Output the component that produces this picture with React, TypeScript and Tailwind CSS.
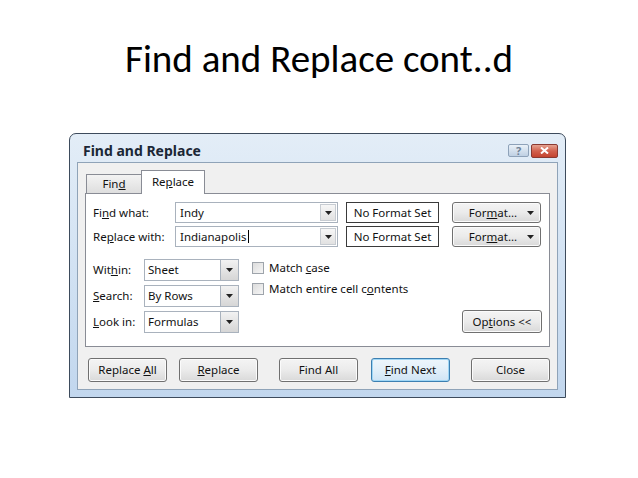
import React from 'react';

const ui = { fontFamily: '"Noto Sans", "Open Sans", sans-serif' };

const Arrow = () => (
  <svg width="7" height="4" viewBox="0 0 7 4">
    <path d="M0 0 L7 0 L3.5 4 Z" fill="#222" />
  </svg>
);

const Combo = ({ value, caret = false }: { value: string; caret?: boolean }) => (
  <div className="flex h-[21px] w-[163px] border border-[#a9b2bd] bg-white">
    <div className="flex flex-1 items-center pl-[4px] text-[11.5px] text-[#111]">
      <span>{value}</span>
      {caret && <span className="ml-px h-[13px] w-px bg-black" />}
    </div>
    <div className="m-px flex w-[16px] items-center justify-center border border-[#c7ccd2] bg-gradient-to-b from-[#f7f7f7] to-[#e1e1e1]">
      <Arrow />
    </div>
  </div>
);

const Select = ({ value }: { value: string }) => (
  <div className="flex h-[22px] w-[95px] border border-[#a9b2bd] bg-white">
    <div className="flex flex-1 items-center pl-[3px] text-[11.5px] text-[#111]">{value}</div>
    <div className="flex w-[18px] items-center justify-center border-l border-[#a9b2bd] bg-gradient-to-b from-[#f2f2f2] to-[#d6d6d6]">
      <Arrow />
    </div>
  </div>
);

const Btn = ({ children, className = '' }: { children: React.ReactNode; className?: string }) => (
  <div
    className={`flex items-center justify-center rounded-[3px] border border-[#707070] bg-gradient-to-b from-[#f4f4f4] via-[#ebebeb] to-[#d9d9d9] text-[11.5px] text-[#111] shadow-[inset_0_0_0_1px_#fbfbfb] ${className}`}
  >
    {children}
  </div>
);

const Check = ({ children }: { children: React.ReactNode }) => (
  <div className="flex items-center gap-[5px]">
    <div className="h-[12px] w-[12px] border border-[#9ea4ab] bg-gradient-to-br from-[#dcdcdc] to-[#f6f6f6]" />
    <span className="text-[11.5px] leading-[14px] text-[#111]">{children}</span>
  </div>
);

const FormatBtn = () => (
  <Btn className="ml-[13px] h-[21px] w-[89px] gap-[10px] pl-[10px]">
    <span>
      For<u>m</u>at...
    </span>
    <Arrow />
  </Btn>
);

export default function App() {
  return (
    <div className="h-[478px] w-[638px] overflow-hidden bg-white" style={ui}>
      <h1
        className="mt-[35px] text-center text-[39px] leading-[48px] text-black"
        style={{ fontFamily: 'Carlito, Lato, sans-serif' }}
      >
        Find and Replace cont..d
      </h1>

      <div className="ml-[69px] mt-[50px] flex h-[265px] w-[497px] flex-col rounded-t-[7px] border border-[#3d4b5c] bg-gradient-to-b from-[#e3edf7] via-[#d2e2f3] to-[#c2d7ee]">
        {/* title bar */}
        <div className="flex h-[28px] items-center justify-between pl-[13px] pr-[7px] pt-[5px]">
          <span className="text-[14px] font-bold text-[#1b2735]">Find and Replace</span>
          <div className="flex items-center gap-[2px]">
            <div className="flex h-[13px] w-[21px] items-center justify-center rounded-[2px] border border-[#8ea2b9] bg-gradient-to-b from-[#eaf1f8] to-[#bfd0e3] text-[11px] font-bold leading-none text-[#6f8196]">
              ?
            </div>
            <div className="flex h-[14px] w-[27px] items-center justify-center rounded-[2px] border border-[#8a3a32] bg-gradient-to-b from-[#e4a291] via-[#d2614e] to-[#c44430]">
              <svg width="9" height="7" viewBox="0 0 9 7">
                <path d="M1 0.5 L8 6.5 M8 0.5 L1 6.5" stroke="#fff" strokeWidth="2" />
              </svg>
            </div>
          </div>
        </div>

        {/* client */}
        <div className="mx-[7px] mb-[7px] flex flex-1 flex-col border border-[#8fa3b8] bg-[#f0f0f0]">
          {/* tabs */}
          <div className="ml-[8px] mt-[7px] flex h-[23px] items-end">
            <div className="flex h-[19px] w-[55px] items-center justify-center border border-b-0 border-r-0 border-[#898c95] bg-gradient-to-b from-[#f3f3f3] to-[#dedede] text-[11.5px] text-[#111]">
              <span>
                Fin<u>d</u>
              </span>
            </div>
            <div className="relative z-10 -mb-px flex h-[24px] w-[64px] items-center justify-center border border-b-0 border-[#898c95] bg-white pb-[2px] text-[11.5px] text-[#111]">
              <span>
                Re<u>p</u>lace
              </span>
            </div>
          </div>

          {/* panel */}
          <div className="ml-[7px] flex h-[154px] w-[465px] flex-col border border-[#898c95] bg-white px-[7px] pt-[8px] text-[11.5px] text-[#111]">
            <div className="flex items-center">
              <span className="w-[82px]">
                Fi<u>n</u>d what:
              </span>
              <Combo value="Indy" />
              <div className="ml-[8px] flex h-[21px] w-[93px] items-center justify-center border border-[#3a3a3a]">
                No Format Set
              </div>
              <FormatBtn />
            </div>
            <div className="mt-[3px] flex items-center">
              <span className="w-[82px]">
                Re<u>p</u>lace with:
              </span>
              <Combo value="Indianapolis" caret />
              <div className="ml-[8px] flex h-[21px] w-[93px] items-center justify-center border border-[#3a3a3a]">
                No Format Set
              </div>
              <FormatBtn />
            </div>

            <div className="mt-[12px] flex">
              <div className="flex flex-col gap-[4px]">
                <div className="flex items-center">
                  <span className="w-[51px]">
                    Wit<u>h</u>in:
                  </span>
                  <Select value="Sheet" />
                </div>
                <div className="flex items-center">
                  <span className="w-[51px]">
                    <u>S</u>earch:
                  </span>
                  <Select value="By Rows" />
                </div>
                <div className="flex items-center">
                  <span className="w-[51px]">
                    <u>L</u>ook in:
                  </span>
                  <Select value="Formulas" />
                </div>
              </div>
              <div className="ml-[13px] mt-[2px] flex flex-col gap-[7px]">
                <Check>
                  Match <u>c</u>ase
                </Check>
                <Check>
                  Match entire cell c<u>o</u>ntents
                </Check>
              </div>
              <div className="ml-auto flex flex-col justify-end">
                <Btn className="h-[23px] w-[80px]">
                  <span>
                    Op<u>t</u>ions &lt;&lt;
                  </span>
                </Btn>
              </div>
            </div>
          </div>

          {/* bottom buttons */}
          <div className="ml-[10px] mt-[11px] flex">
            <Btn className="h-[24px] w-[79px]">
              <span>
                Replace <u>A</u>ll
              </span>
            </Btn>
            <Btn className="ml-[12px] h-[24px] w-[79px]">
              <span>
                <u>R</u>eplace
              </span>
            </Btn>
            <Btn className="ml-[21px] h-[24px] w-[79px]">
              <span>Find All</span>
            </Btn>
            <div className="ml-[13px] flex h-[24px] w-[79px] items-center justify-center rounded-[3px] border border-[#3c7fb1] bg-gradient-to-b from-[#eef6fc] via-[#e2eff9] to-[#cfe4f5] text-[11.5px] text-[#111] shadow-[inset_0_0_0_1px_#9fd6f5]">
              <span>
                <u>F</u>ind Next
              </span>
            </div>
            <Btn className="ml-[21px] h-[24px] w-[79px]">
              <span>Close</span>
            </Btn>
          </div>
        </div>
      </div>
    </div>
  );
}
